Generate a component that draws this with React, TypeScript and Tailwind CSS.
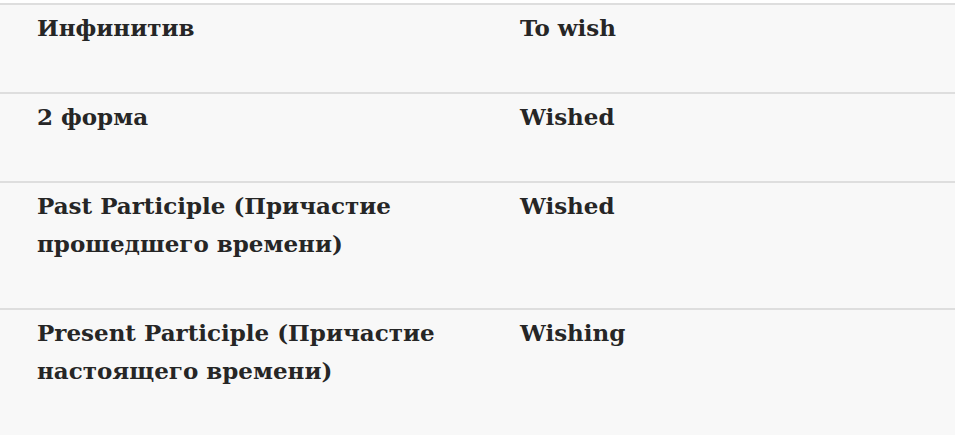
const rows = [
  { left: "Инфинитив", right: "To wish" },
  { left: "2 форма", right: "Wished" },
  { left: "Past Participle (Причастие прошедшего времени)", right: "Wished" },
  { left: "Present Participle (Причастие настоящего времени)", right: "Wishing" },
];

export default function App() {
  return (
    <div className="h-[436px] w-[958px] overflow-hidden bg-white pt-[3px]">
      <table
        className="w-[955px] table-fixed border-collapse bg-[#f8f8f8] text-[23px] font-bold leading-[38px] text-[#262626]"
        style={{ fontFamily: '"DejaVu Serif", "Liberation Serif", serif' }}
      >
        <colgroup>
          <col className="w-[490px]" />
          <col />
        </colgroup>
        <tbody>
          {rows.map((row) => (
            <tr key={row.left} className="border-t-2 border-[#dedede] align-top">
              <td className="pt-[4px] pb-[45px] pl-[37px] pr-[40px]">{row.left}</td>
              <td className="pt-[4px] pb-[45px] pl-[30px]">{row.right}</td>
            </tr>
          ))}
        </tbody>
      </table>
    </div>
  );
}
